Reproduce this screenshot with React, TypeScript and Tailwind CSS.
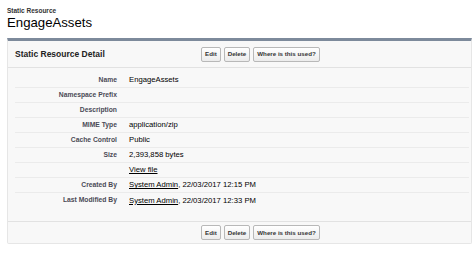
import React from "react";

const rows: { label: string; value?: React.ReactNode }[] = [
  { label: "Name", value: "EngageAssets" },
  { label: "Namespace Prefix" },
  { label: "Description" },
  { label: "MIME Type", value: "application/zip" },
  { label: "Cache Control", value: "Public" },
  { label: "Size", value: "2,393,858 bytes" },
  { label: "", value: <span className="underline">View file</span> },
  {
    label: "Created By",
    value: (
      <>
        <span className="underline">System Admin</span>, 22/03/2017 12:15 PM
      </>
    ),
  },
  {
    label: "Last Modified By",
    value: (
      <>
        <span className="underline">System Admin</span>, 22/03/2017 12:33 PM
      </>
    ),
  },
];

function Btn({ children }: { children: React.ReactNode }) {
  return (
    <div className="h-[15px] px-[3px] flex items-center rounded-[2px] border border-[#b8b8b8] bg-gradient-to-b from-[#ffffff] to-[#ececec] text-[6.2px] font-bold text-[#333]">
      {children}
    </div>
  );
}

function Buttons() {
  return (
    <div className="flex gap-[3px]">
      <Btn>Edit</Btn>
      <Btn>Delete</Btn>
      <Btn>Where is this used?</Btn>
    </div>
  );
}

export default function App() {
  return (
    <div
      className="w-[474px] h-[255px] bg-white overflow-hidden"
      style={{ fontFamily: '"Liberation Sans", Arial, sans-serif' }}
    >
      <div className="pl-[7px] pt-[7px] h-[38px]">
        <div className="text-[6.5px] font-bold text-[#333] leading-[8px]">Static Resource</div>
        <div className="text-[13.2px] text-black leading-[16px]">EngageAssets</div>
      </div>
      <div className="ml-[7px] w-[465px] bg-[#f8f8f8] border border-[#e6e6e6] border-t-[3px] border-t-[#7d8a9b] rounded-b-[2px]">
        <div className="h-[27px] flex items-center border-b border-[#e2e2e2]">
          <div className="w-[193px] pl-[7px] text-[8.5px] font-bold text-[#222]">
            Static Resource Detail
          </div>
          <Buttons />
        </div>
        <div className="pt-[5px] pb-[13px] pl-[7px] pr-[2px]">
          {rows.map((r, i) => (
            <div
              key={i}
              className={`flex items-center h-[15px] ${
                i < rows.length - 1 ? "border-b border-[#ebebeb]" : ""
              }`}
            >
              <div className="w-[102px] text-right text-[6.75px] font-bold text-[#4a4a56]">
                {r.label}
              </div>
              <div className="pl-[12px] text-[7.7px] text-black whitespace-nowrap">{r.value}</div>
            </div>
          ))}
        </div>
        <div className="h-[22px] flex items-center border-t border-[#e2e2e2]">
          <div className="w-[193px]" />
          <Buttons />
        </div>
      </div>
    </div>
  );
}
